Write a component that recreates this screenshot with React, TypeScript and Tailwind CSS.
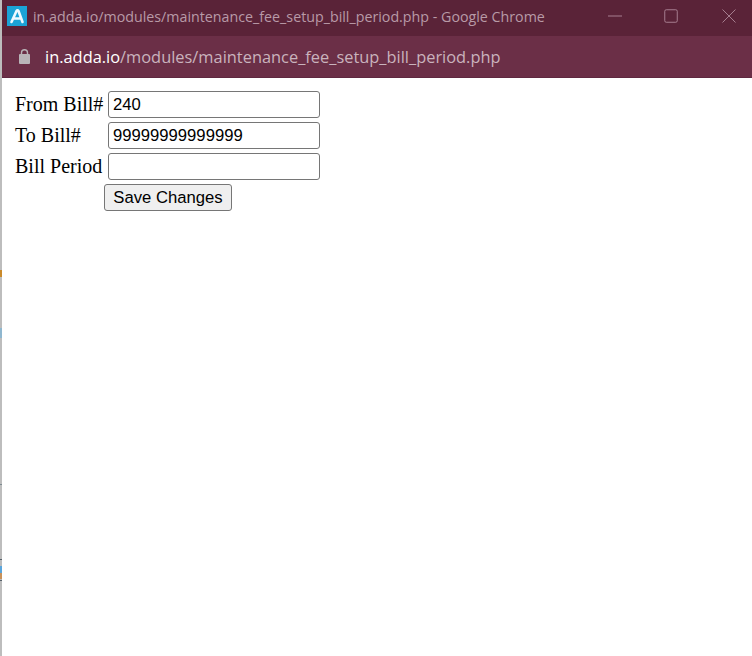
import React from "react";

const fields = [
	{ label: "From Bill#", value: "240" },
	{ label: "To Bill#", value: "99999999999999" },
	{ label: "Bill Period", value: "" },
];

// bits of the page behind the popup that peek out at the left edge
const edgeMarks = [
	{ top: 270, height: 7, color: "#c98a2b" },
	{ top: 328, height: 10, color: "#8fb7cf" },
	{ top: 484, height: 1, color: "#7d8a90" },
	{ top: 559, height: 1, color: "#55606a" },
	{ top: 566, height: 7, color: "#5aa5dc" },
	{ top: 573, height: 6, color: "#c9925a" },
	{ top: 580, height: 1, color: "#55606a" },
];

function AddaLogo() {
	return (
		<svg width="20" height="20" viewBox="0 0 20 20" className="shrink-0">
			<rect width="20" height="20" fill="#1ba3d6" />
			<path
				d="M4.5 16 L9.5 5 Q10.5 3.5 11.5 5 L15.5 16 M7.5 12.5 H13"
				fill="none"
				stroke="#eefaff"
				strokeWidth="2.6"
				strokeLinecap="round"
				strokeLinejoin="round"
			/>
		</svg>
	);
}

function WindowControls() {
	return (
		<div className="flex items-center text-[#a67e8f]">
			<svg width="14" height="2" viewBox="0 0 14 2" className="mr-[42px]">
				<path d="M0 1 H14" stroke="currentColor" strokeWidth="1" />
			</svg>
			<svg width="14" height="14" viewBox="0 0 14 14" className="mr-[44px]">
				<rect x="0.75" y="0.75" width="12.5" height="12.5" rx="1.5" fill="none" stroke="currentColor" strokeWidth="1" />
			</svg>
			<svg width="14" height="14" viewBox="0 0 14 14" className="mr-[16px]">
				<path d="M0.5 0.5 L13.5 13.5 M13.5 0.5 L0.5 13.5" stroke="currentColor" strokeWidth="1" />
			</svg>
		</div>
	);
}

export default function App() {
	return (
		<div className="relative flex h-[656px] w-[752px] flex-col border-l-2 border-l-[#bdbdbd] bg-white">
			{edgeMarks.map((m) => (
				<span
					key={m.top}
					className="absolute left-[-2px] w-[2px]"
					style={{ top: m.top, height: m.height, backgroundColor: m.color }}
				/>
			))}
			<div className="flex h-[36px] shrink-0 items-center justify-between bg-[#5a2338] pb-[4px] pl-[5px]">
				<div className="flex items-center gap-[6px]">
					<AddaLogo />
					<span className="mt-[2px] font-['Open_Sans',sans-serif] text-[14.25px] text-[#b89aa7]">
						in.adda.io/modules/maintenance_fee_setup_bill_period.php - Google Chrome
					</span>
				</div>
				<WindowControls />
			</div>
			<div className="flex h-[42px] shrink-0 items-center gap-[15px] border-b border-b-[#5f2840] bg-[#6b2f47] pl-[17px] font-['Open_Sans',sans-serif] text-[16.4px]">
				<svg width="11" height="15" viewBox="0 0 11 15" className="shrink-0">
					<path d="M2.5 6 V3.8 a3 3 0 0 1 6 0 V6" fill="none" stroke="#b9b4b8" strokeWidth="1.4" />
					<rect x="0" y="5" width="11" height="10" rx="1" fill="#b9b4b8" />
				</svg>
				<span className="mt-[2px]">
					<span className="text-white">in.adda.io</span>
					<span className="text-[#c9b3bd]">/modules/maintenance_fee_setup_bill_period.php</span>
				</span>
			</div>
			<div className="flex flex-col items-start pl-[13px] pt-[13px] font-['Liberation_Serif',serif] text-[20px] text-black">
				{fields.map((f) => (
					<div key={f.label} className="mb-[4px] flex h-[27px] items-center">
						<span className="mb-[2px] w-[93px] whitespace-nowrap">{f.label}</span>
						<input
							readOnly
							value={f.value}
							className="h-[27px] w-[212px] rounded-[3px] border border-[#767676] px-[4px] font-['Liberation_Sans',sans-serif] text-[16.67px] text-black outline-none"
						/>
					</div>
				))}
				<button className="ml-[89px] h-[27px] w-[128px] rounded-[3px] border border-[#767676] bg-[#efefef] font-['Liberation_Sans',sans-serif] text-[16.67px] text-black">
					Save Changes
				</button>
			</div>
		</div>
	);
}
